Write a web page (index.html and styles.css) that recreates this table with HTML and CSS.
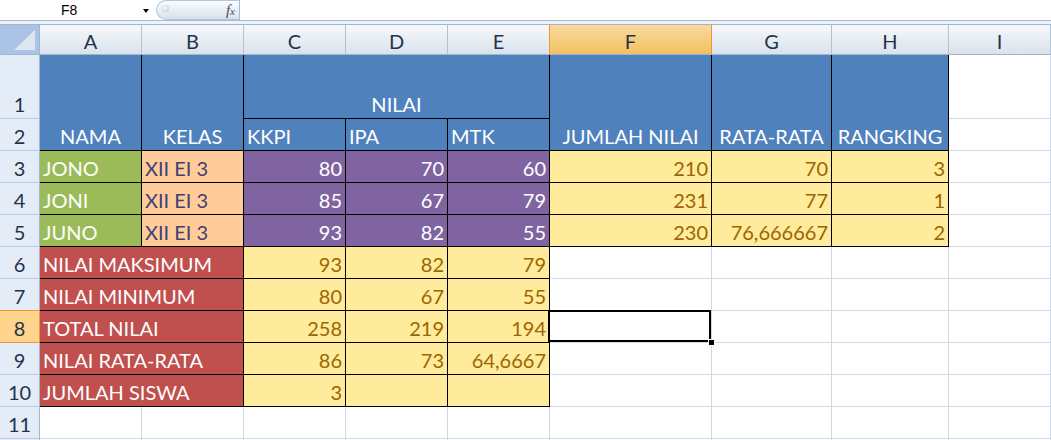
FILE: index.html
```html
<!DOCTYPE html>
<html>
<head>
<meta charset="utf-8">
<link rel="stylesheet" href="styles.css">
</head>
<body>
<div class="app">
  <div class="fbar">
    <div class="namebox">F8</div>
    <div class="nb-arrow"></div>
    <div class="fxpill"><span class="dot"></span><span class="fx"><i>f</i><i class="fx-x">x</i></span></div>
    <div class="formula"></div>
  </div>
  <div class="gap"></div>
  <div class="sheet">
    <div class="corner"><svg width="39" height="29" viewBox="0 0 39 29"><polygon points="14,25 35,5 35,25" fill="#DDE6F2"/></svg></div>
    <div class="ch">A</div><div class="ch">B</div><div class="ch">C</div><div class="ch">D</div><div class="ch">E</div>
    <div class="ch ch-sel">F</div><div class="ch">G</div><div class="ch">H</div><div class="ch">I</div>

    <div class="rh">1</div>
    <div class="c blue r2 ctr">NAMA</div>
    <div class="c blue r2 ctr">KELAS</div>
    <div class="c blue c3 ctr">NILAI</div>
    <div class="c blue r2 ctr">JUMLAH NILAI</div>
    <div class="c blue r2 ctr">RATA-RATA</div>
    <div class="c blue r2 ctr">RANGKING</div>
    <div class="c"></div>

    <div class="rh">2</div>
    <div class="c blue">KKPI</div><div class="c blue">IPA</div><div class="c blue">MTK</div>
    <div class="c"></div>

    <div class="rh">3</div>
    <div class="c green">JONO</div><div class="c peach">XII EI 3</div>
    <div class="c purple rt">80</div><div class="c purple rt">70</div><div class="c purple rt">60</div>
    <div class="c yel rt">210</div><div class="c yel rt">70</div><div class="c yel rt">3</div>
    <div class="c"></div>

    <div class="rh">4</div>
    <div class="c green">JONI</div><div class="c peach">XII EI 3</div>
    <div class="c purple rt">85</div><div class="c purple rt">67</div><div class="c purple rt">79</div>
    <div class="c yel rt">231</div><div class="c yel rt">77</div><div class="c yel rt">1</div>
    <div class="c"></div>

    <div class="rh">5</div>
    <div class="c green">JUNO</div><div class="c peach">XII EI 3</div>
    <div class="c purple rt">93</div><div class="c purple rt">82</div><div class="c purple rt">55</div>
    <div class="c yel rt">230</div><div class="c yel rt">76,666667</div><div class="c yel rt">2</div>
    <div class="c"></div>

    <div class="rh">6</div>
    <div class="c red c2">NILAI MAKSIMUM</div>
    <div class="c yel rt">93</div><div class="c yel rt">82</div><div class="c yel rt">79</div>
    <div class="c"></div><div class="c"></div><div class="c"></div><div class="c"></div>

    <div class="rh">7</div>
    <div class="c red c2">NILAI MINIMUM</div>
    <div class="c yel rt">80</div><div class="c yel rt">67</div><div class="c yel rt">55</div>
    <div class="c"></div><div class="c"></div><div class="c"></div><div class="c"></div>

    <div class="rh rh-sel">8</div>
    <div class="c red c2">TOTAL NILAI</div>
    <div class="c yel rt">258</div><div class="c yel rt">219</div><div class="c yel rt">194</div>
    <div class="c active"></div><div class="c"></div><div class="c"></div><div class="c"></div>

    <div class="rh">9</div>
    <div class="c red c2">NILAI RATA-RATA</div>
    <div class="c yel rt">86</div><div class="c yel rt">73</div><div class="c yel rt">64,6667</div>
    <div class="c"></div><div class="c"></div><div class="c"></div><div class="c"></div>

    <div class="rh">10</div>
    <div class="c red c2">JUMLAH SISWA</div>
    <div class="c yel rt">3</div><div class="c yel"></div><div class="c yel"></div>
    <div class="c"></div><div class="c"></div><div class="c"></div><div class="c"></div>

    <div class="rh">11</div>
    <div class="c"></div><div class="c"></div><div class="c"></div><div class="c"></div><div class="c"></div>
    <div class="c"></div><div class="c"></div><div class="c"></div><div class="c"></div>

    <div class="rh"></div>
    <div class="c"></div><div class="c"></div><div class="c"></div><div class="c"></div><div class="c"></div>
    <div class="c"></div><div class="c"></div><div class="c"></div><div class="c"></div>
  </div>
</div>
</body>
</html>
```

FILE: styles.css
```css
html, body {
  margin: 0;
  padding: 0;
  background: #fff;
  overflow: hidden;
}
body {
  width: 1051px;
  height: 440px;
  font-family: Lato, "Noto Sans", sans-serif;
}
.app {
  width: 1051px;
  height: 440px;
  overflow: hidden;
}

/* formula bar */
.fbar {
  display: flex;
  height: 20px;
  border-bottom: 1px solid #A5BAD6;
  background: #fff;
}
.namebox {
  width: 140px;
  box-sizing: border-box;
  padding-left: 61px;
  font: 14px/20px "Liberation Sans", Arial, sans-serif;
  color: #000;
}
.nb-arrow {
  width: 0;
  height: 0;
  margin-left: 3px;
  margin-top: 9px;
  border-left: 3.5px solid transparent;
  border-right: 3.5px solid transparent;
  border-top: 4px solid #000;
}
.fxpill {
  margin-left: 7px;
  width: 83px;
  height: 20px;
  box-sizing: border-box;
  border: 1px solid #B4C6DC;
  border-right: none;
  border-radius: 10px 0 0 10px;
  background: linear-gradient(#FBFCFE, #D6E1EE);
  display: flex;
  align-items: center;
  padding-left: 5px;
}
.dot {
  width: 7px;
  height: 7px;
  border-radius: 50%;
  background: radial-gradient(circle at 40% 40%, #fdfdfd, #b9c1cb);
  margin-top: -3px;
}
.fx {
  margin-left: auto;
  padding-right: 4px;
  font-family: "Liberation Serif", serif;
  font-size: 15px;
  color: #4a4a4a;
  line-height: 18px;
}
.fx-x {
  font-size: 11px;
}
.formula {
  flex: 1;
  border-left: 1px solid #A5BAD6;
}
.gap {
  height: 3px;
  background: #EEF3FA;
}

/* sheet grid */
.sheet {
  display: grid;
  grid-template-columns: 40px 102px 102px 102px 102px 102px 162px 120px 117px 1fr;
  grid-template-rows: 31px 64px repeat(11, 32px);
  font-size: 20px;
  line-height: 24px;
}
.sheet > div {
  box-sizing: border-box;
  display: flex;
  align-items: flex-end;
  white-space: nowrap;
  overflow: hidden;
}
.corner {
  background: #ABC4E6;
  border-top: 1px solid #9EB6CE;
  border-bottom: 1px solid #9EB6CE;
  border-right: 1px solid #9EB6CE;
  align-items: flex-start !important;
}
.ch {
  justify-content: center;
  padding-bottom: 1px;
  background: linear-gradient(#F6F8FB, #DAE2EC);
  border-top: 1px solid #9EB6CE;
  border-bottom: 1px solid #9EB6CE;
  border-right: 1px solid #AFC2DA;
  color: #1F3449;
}
.ch-sel {
  background: linear-gradient(#F9DA9F, #F1C15E);
  border-right-color: #F29536;
  box-shadow: -1px 0 0 #F29536;
  position: relative;
}
.rh {
  justify-content: center;
  padding-bottom: 2px;
  background: #E4ECF7;
  border-right: 1px solid #9EB6CE;
  border-bottom: 1px solid #B9CBE1;
  color: #1F3449;
}
.rh-sel {
  background: #FFD58E;
  border-right-color: #F29536;
  border-bottom-color: #F29536;
  box-shadow: 0 -1px 0 #F29536;
  position: relative;
}
.c {
  padding: 0 3px 2px;
  border-right: 1px solid #D0D7E5;
  border-bottom: 1px solid #D0D7E5;
}
.r2 { grid-row: span 2; }
.c2 { grid-column: span 2; }
.c3 { grid-column: span 3; }
.ctr { justify-content: center; }
.rt { justify-content: flex-end; }

.blue, .green, .peach, .purple, .red, .yel {
  border-right-color: #000;
  border-bottom-color: #000;
}
.blue { background: #4F81BD; color: #fff; }
.green { background: #9BBB59; color: #fff; }
.peach { background: #FFCC99; color: #3F3F76; }
.purple { background: #8064A2; color: #fff; }
.red { background: #C0504D; color: #fff; }
.yel { background: #FFEB9C; color: #9C6500; }

.active {
  position: relative;
  overflow: visible !important;
  z-index: 2;
}
.active::before {
  content: "";
  position: absolute;
  left: -2px;
  top: -1px;
  right: 0;
  bottom: 0;
  border: 2px solid #000;
}
.active::after {
  content: "";
  position: absolute;
  right: -4px;
  bottom: -4px;
  width: 5px;
  height: 5px;
  background: #000;
  border: 1px solid #fff;
}
```
